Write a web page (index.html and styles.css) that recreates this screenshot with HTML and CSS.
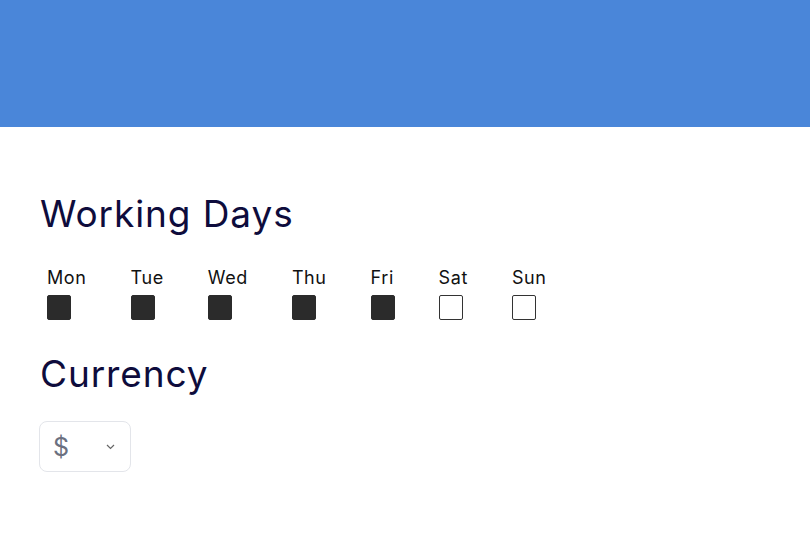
FILE: index.html
```html
<!DOCTYPE html>
<html lang="en">
<head>
  <meta charset="UTF-8">
  <meta name="viewport" content="width=device-width, initial-scale=1.0">
  <title>Settings</title>
  <link rel="stylesheet" href="styles.css">
</head>
<body>
  <div class="top-bar"></div>

  <div class="content">
    <h2 class="section-title">Working Days</h2>
    <div class="days">
      <label class="day"><span>Mon</span><input type="checkbox" checked></label>
      <label class="day"><span>Tue</span><input type="checkbox" checked></label>
      <label class="day"><span>Wed</span><input type="checkbox" checked></label>
      <label class="day"><span>Thu</span><input type="checkbox" checked></label>
      <label class="day"><span>Fri</span><input type="checkbox" checked></label>
      <label class="day"><span>Sat</span><input type="checkbox"></label>
      <label class="day"><span>Sun</span><input type="checkbox"></label>
    </div>

    <h2 class="section-title currency-title">Currency</h2>
    <div class="currency-select">
      <span class="currency-value">$</span>
      <svg class="chevron" width="9" height="6" viewBox="0 0 9 6"><path d="M1 1l3.5 3.5L8 1" fill="none" stroke="#666" stroke-width="1.2"/></svg>
    </div>
  </div>
</body>
</html>
```

FILE: styles.css
```css
body {
  margin: 0;
  font-family: Inter, "Noto Sans", sans-serif;
  background-color: #ffffff;
}

.top-bar {
  height: 127px;
  background-color: #4a86d9;
}

.content {
  padding-left: 40px;
}

.section-title {
  margin: 65px 0 0 0;
  font-size: 37px;
  line-height: 44px;
  font-weight: 400;
  color: #0e0c3c;
  letter-spacing: 0.9px;
}

.currency-title {
  margin-top: 32px;
}

.days {
  display: flex;
  gap: 44px;
  margin-top: 31px;
  padding-left: 7px;
}

.day {
  display: flex;
  flex-direction: column;
  align-items: flex-start;
  font-size: 18px;
  line-height: 22px;
  letter-spacing: 0.6px;
  color: #111;
}

.day input {
  appearance: none;
  margin: 6px 0 0 0;
  width: 24px;
  height: 25px;
  border: 1px solid #333;
  border-radius: 2px;
  background-color: #fff;
}

.day input:checked {
  background-color: #2b2b2b;
  border-color: #2b2b2b;
}

.currency-select {
  display: flex;
  align-items: center;
  justify-content: space-between;
  box-sizing: border-box;
  width: 92px;
  height: 51px;
  margin-top: 25px;
  margin-left: -1px;
  padding: 0 15px 0 13px;
  border: 1px solid #e3e5ea;
  border-radius: 8px;
}

.currency-value {
  font-size: 25px;
  color: #6b7080;
}
```
